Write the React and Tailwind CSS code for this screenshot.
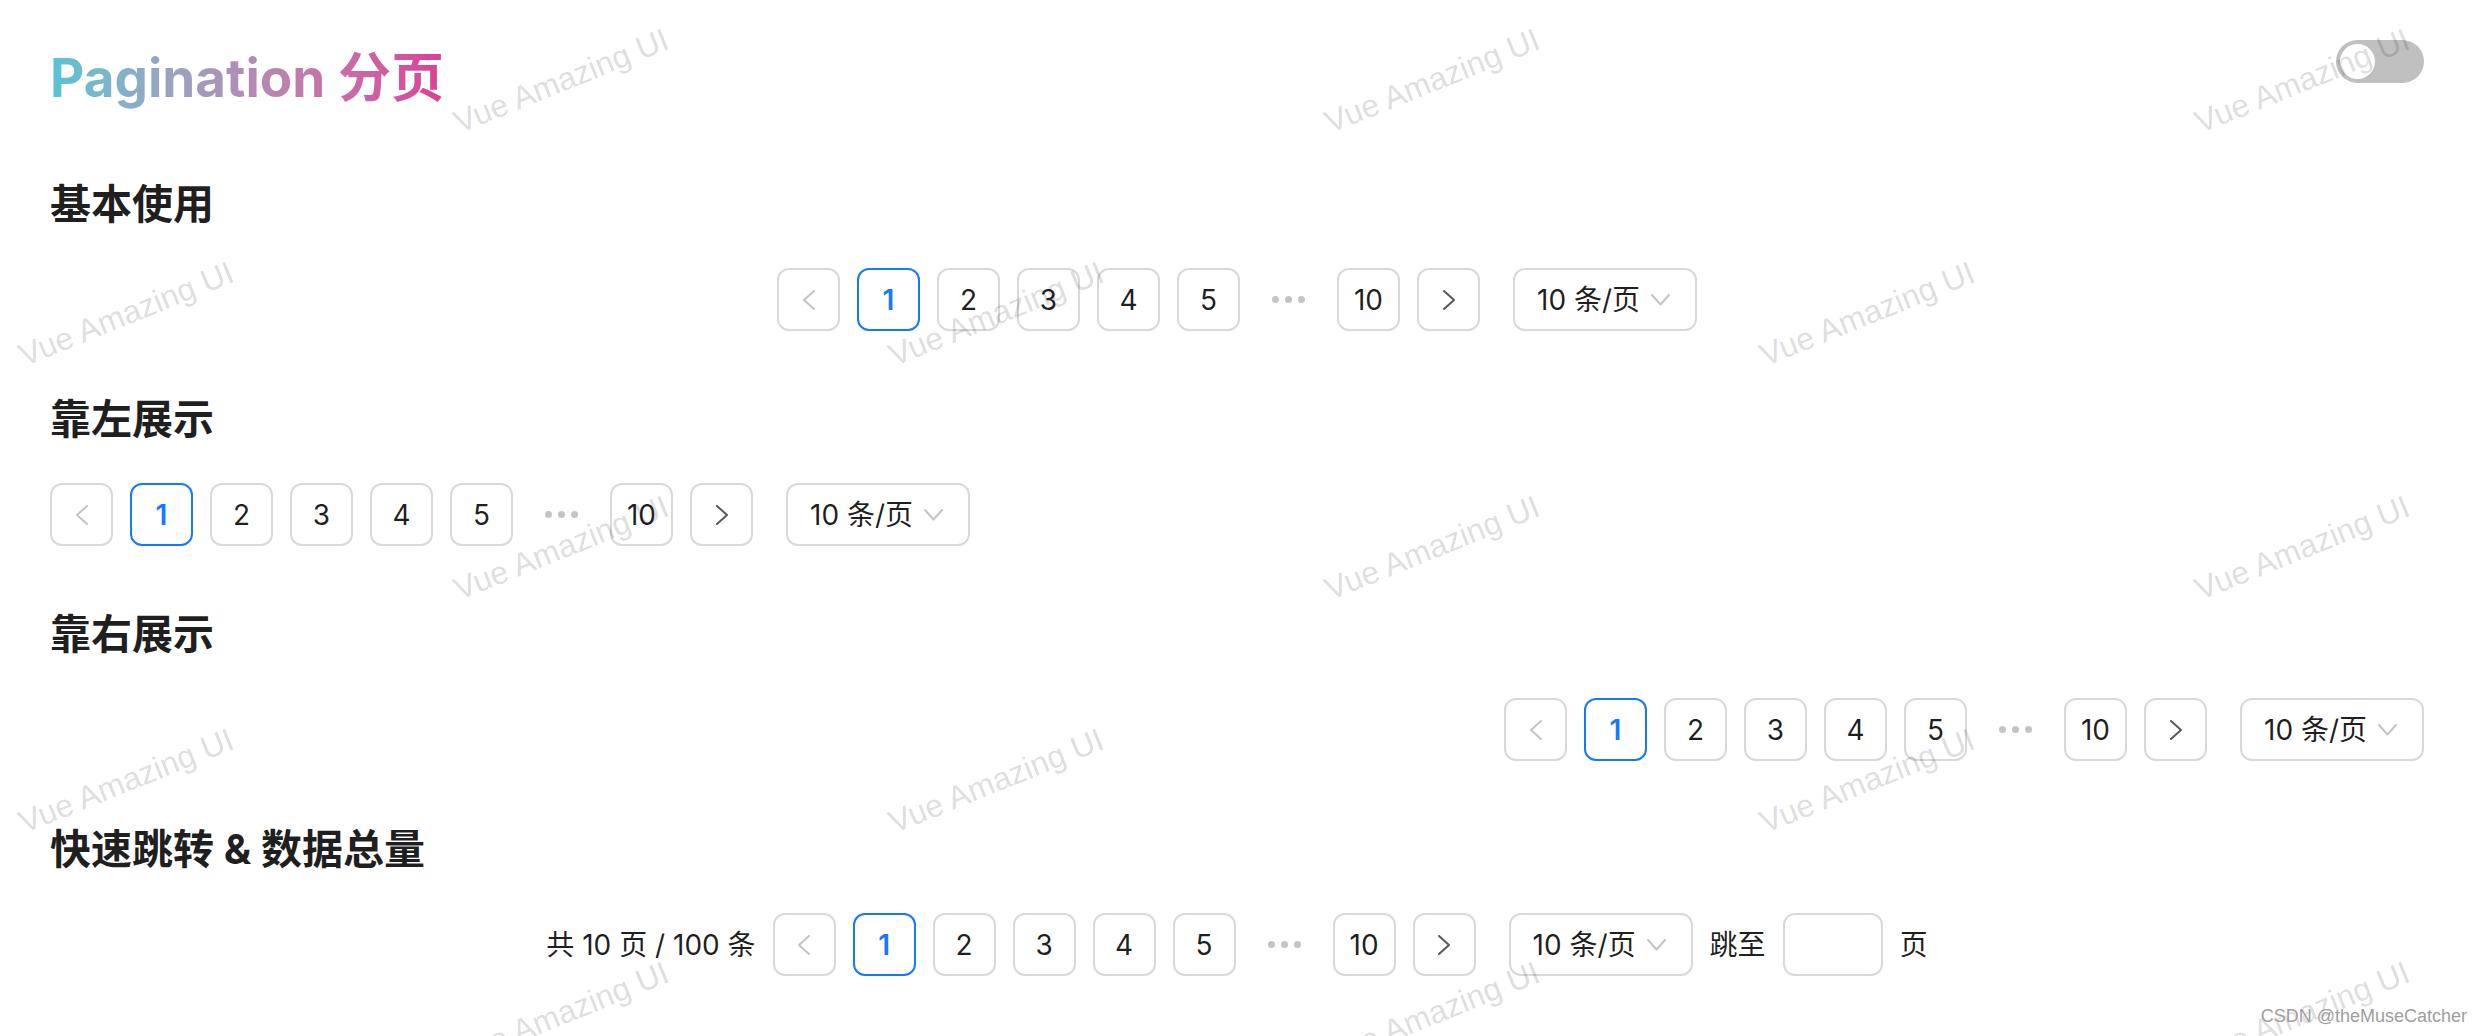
import React from 'react'

const marks = [
  [562, 83], [1433, 83], [2303, 83],
  [127, 316], [997, 316], [1868, 316],
  [562, 550], [1433, 550], [2303, 550],
  [127, 783], [997, 783], [1868, 783],
  [562, 1016], [1433, 1016], [2303, 1016],
]

const Chevron = ({ dir, className }) => (
  <svg width="14" height="20" viewBox="0 0 14 20" fill="none" className={className}>
    <polyline
      points={dir === 'left' ? '12,1 2,10 12,19' : '2,1 12,10 2,19'}
      stroke="currentColor" strokeWidth="2" strokeLinecap="round" strokeLinejoin="round"
    />
  </svg>
)

const PageBtn = ({ active, children }) => (
  <div className={`w-[63px] h-[63px] flex items-center justify-center rounded-[12px] border-2 bg-white text-[28px] ${active ? 'border-[#1677ff] text-[#1677ff] font-semibold' : 'border-[#d9d9d9] text-[#000000e0]'}`}>
    {children}
  </div>
)

const Pager = ({ total, jumper }) => (
  <div className="flex items-center gap-[17px] text-[28px] text-[#000000e0]">
    {total && <span className="whitespace-nowrap">共 10 页 / 100 条</span>}
    <PageBtn><Chevron dir="left" className="text-[#c4c4c4]" /></PageBtn>
    {[1, 2, 3, 4, 5].map(n => <PageBtn key={n} active={n === 1}>{n}</PageBtn>)}
    <div className="w-[63px] flex items-center justify-center gap-[6px]">
      <span className="w-[7px] h-[7px] rounded-full bg-[#c4c4c4]" />
      <span className="w-[7px] h-[7px] rounded-full bg-[#c4c4c4]" />
      <span className="w-[7px] h-[7px] rounded-full bg-[#c4c4c4]" />
    </div>
    <PageBtn>10</PageBtn>
    <PageBtn><Chevron dir="right" className="text-[#595959]" /></PageBtn>
    <div className="ml-4 w-[184px] h-[63px] flex items-center justify-between pl-[22px] pr-[25px] rounded-[12px] border-2 border-[#d9d9d9] bg-white">
      <span className="whitespace-nowrap">10 条/页</span>
      <svg width="19" height="12" viewBox="0 0 19 12" fill="none">
        <polyline points="1,1 9.5,10.5 18,1" stroke="#c4c4c4" strokeWidth="2" strokeLinecap="round" strokeLinejoin="round" />
      </svg>
    </div>
    {jumper && (
      <>
        <span className="whitespace-nowrap">跳至</span>
        <div className="w-[100px] h-[63px] rounded-[12px] border-2 border-[#d9d9d9] bg-white" />
        <span>页</span>
      </>
    )}
  </div>
)

const Section = ({ title, align, children }) => (
  <section className="mt-[60px] first:mt-[59px]">
    <h2 className="text-[41px] leading-[56px] font-bold text-[#000000e0]">{title}</h2>
    <div className={`mt-[36px] flex ${align}`}>{children}</div>
  </section>
)

export default function App() {
  return (
    <div className="relative w-full h-[1036px] overflow-hidden bg-white font-['Inter','Noto_Sans_CJK_SC',sans-serif]">
      <div className="pl-[50px] pr-[58px] pt-[39px]">
        <header className="flex items-start justify-between">
          <h1 className="w-fit text-[53px] leading-[78px] font-bold bg-linear-to-r from-[#55c4d3] to-[#d93f97] bg-clip-text text-transparent">
            Pagination 分页
          </h1>
          <div className="mt-[1px] w-[88px] h-[43px] rounded-full bg-[#c0c0c0] p-[4px] flex items-center">
            <div className="w-[35px] h-[35px] rounded-full bg-white" />
          </div>
        </header>

        <div>
          <Section title="基本使用" align="justify-center"><Pager /></Section>
          <Section title="靠左展示" align="justify-start"><Pager /></Section>
          <Section title="靠右展示" align="justify-end"><Pager /></Section>
          <Section title="快速跳转 & 数据总量" align="justify-center"><Pager total jumper /></Section>
        </div>
      </div>

      {/* watermark */}
      <svg className="absolute inset-0 w-full h-full pointer-events-none" width="2482" height="1036">
        {marks.map(([x, y], i) => (
          <text key={i} x={x} y={y} textAnchor="middle" dominantBaseline="middle"
            transform={`rotate(-22 ${x} ${y})`} fontSize="32"
            fontFamily="'Liberation Sans', Arial, sans-serif" fill="rgba(0,0,0,0.15)">
            Vue Amazing UI
          </text>
        ))}
      </svg>

      <span className="absolute right-[15px] bottom-[6px] text-[18px] text-[#9e9e9e] font-['Liberation_Sans',sans-serif] [text-shadow:0_0_2px_#fff]">
        CSDN @theMuseCatcher
      </span>
    </div>
  )
}
